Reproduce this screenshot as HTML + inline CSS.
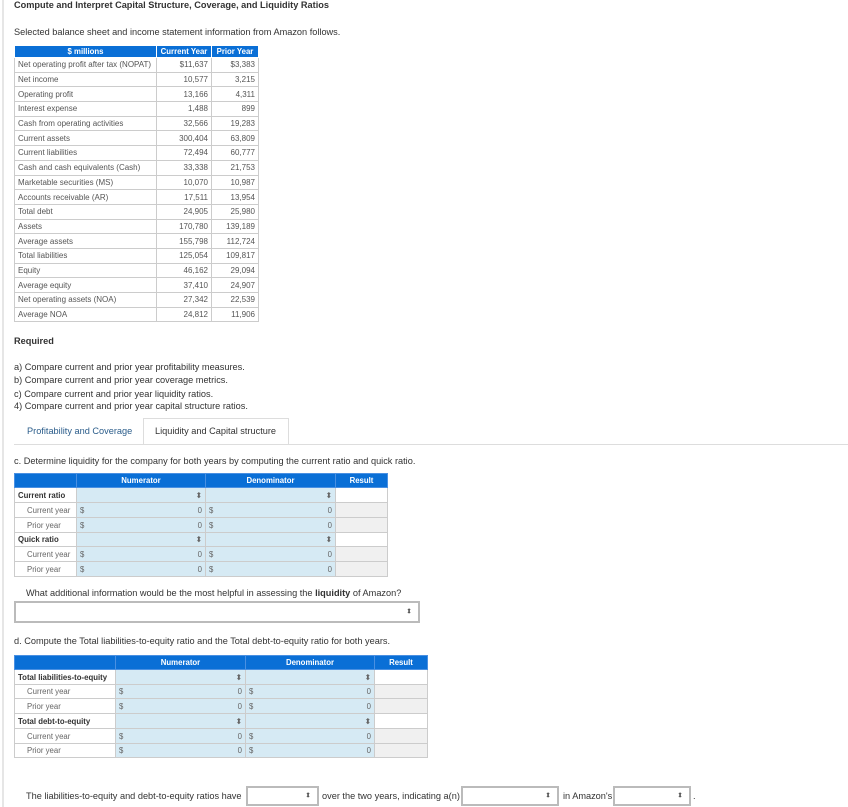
<!DOCTYPE html>
<html><head><meta charset="utf-8"><style>
*{box-sizing:border-box;margin:0;padding:0}
body{width:848px;height:807px;background:#fff;font-family:"Liberation Sans",sans-serif;font-size:9.2px;color:#333;position:relative;overflow:hidden}
.a{position:absolute;white-space:nowrap}
.lb{position:absolute;left:2px;top:0;width:2px;height:807px;background:#e6e6e6}
table{border-collapse:collapse;position:absolute;table-layout:fixed}
td,th{padding:0 3px;overflow:hidden;white-space:nowrap}
.dt td{border:1px solid #ccc;height:14.7px;font-size:8px;color:#555}
.dt td.n{text-align:right}
.dt th{background:#0a6fd6;color:#fff;height:12px;font-size:7.8px;border:1px solid #fff}
.ct th{background:#0a6fd6;color:#fff;font-size:7.8px;height:14px;border:1px solid #4a90e2}
.ct td{border:1px solid #ccc;font-size:7.8px;color:#666}
.ct td.h{font-weight:bold;color:#333}
.ct td.s{padding-left:12px}
.ct td.b{background:#d6eaf4}
.ct td.r{background:#f0f0f0}
.ct td.w{background:#fff}
.sel{position:absolute;border:2px solid #bbb;background:#fff}
.arr{position:absolute;right:6px;top:50%;transform:translateY(-50%);font-size:7px;line-height:3px;color:#555}
</style></head><body>
<div class="lb"></div>
<div class="a" style="left:14px;top:0px;font-weight:bold;font-size:9.2px">Compute and Interpret Capital Structure, Coverage, and Liquidity Ratios</div>
<div class="a" style="left:14px;top:27px">Selected balance sheet and income statement information from Amazon follows.</div>
<table class="dt" style="left:14px;top:45px;width:244px">
<colgroup><col style="width:142px"><col style="width:55px"><col style="width:47px"></colgroup>
<tr><th>$ millions</th><th>Current Year</th><th>Prior Year</th></tr>
<tr><td>Net operating profit after tax (NOPAT)</td><td class="n">$11,637</td><td class="n">$3,383</td></tr>
<tr><td>Net income</td><td class="n">10,577</td><td class="n">3,215</td></tr>
<tr><td>Operating profit</td><td class="n">13,166</td><td class="n">4,311</td></tr>
<tr><td>Interest expense</td><td class="n">1,488</td><td class="n">899</td></tr>
<tr><td>Cash from operating activities</td><td class="n">32,566</td><td class="n">19,283</td></tr>
<tr><td>Current assets</td><td class="n">300,404</td><td class="n">63,809</td></tr>
<tr><td>Current liabilities</td><td class="n">72,494</td><td class="n">60,777</td></tr>
<tr><td>Cash and cash equivalents (Cash)</td><td class="n">33,338</td><td class="n">21,753</td></tr>
<tr><td>Marketable securities (MS)</td><td class="n">10,070</td><td class="n">10,987</td></tr>
<tr><td>Accounts receivable (AR)</td><td class="n">17,511</td><td class="n">13,954</td></tr>
<tr><td>Total debt</td><td class="n">24,905</td><td class="n">25,980</td></tr>
<tr><td>Assets</td><td class="n">170,780</td><td class="n">139,189</td></tr>
<tr><td>Average assets</td><td class="n">155,798</td><td class="n">112,724</td></tr>
<tr><td>Total liabilities</td><td class="n">125,054</td><td class="n">109,817</td></tr>
<tr><td>Equity</td><td class="n">46,162</td><td class="n">29,094</td></tr>
<tr><td>Average equity</td><td class="n">37,410</td><td class="n">24,907</td></tr>
<tr><td>Net operating assets (NOA)</td><td class="n">27,342</td><td class="n">22,539</td></tr>
<tr><td>Average NOA</td><td class="n">24,812</td><td class="n">11,906</td></tr>
</table>
<div class="a" style="left:14px;top:336px;font-weight:bold">Required</div>
<div class="a" style="left:14px;top:362px">a) Compare current and prior year profitability measures.</div>
<div class="a" style="left:14px;top:375px">b) Compare current and prior year coverage metrics.</div>
<div class="a" style="left:14px;top:389px">c) Compare current and prior year liquidity ratios.</div>
<div class="a" style="left:14px;top:401px">4) Compare current and prior year capital structure ratios.</div>
<div class="a" style="left:27px;top:426px;color:#2a5c8a">Profitability and Coverage</div>
<div class="a" style="left:143px;top:418px;width:146px;height:27px;border:1px solid #ddd;border-bottom:none;background:#fff"></div>
<div class="a" style="left:155px;top:426px">Liquidity and Capital structure</div>
<div class="a" style="left:14px;top:444px;width:834px;height:1px;background:#ddd"></div>
<div class="a" style="left:14px;top:456px">c. Determine liquidity for the company for both years by computing the current ratio and quick ratio.</div>
<table class="ct" style="left:14px;top:473px;width:373px">
<colgroup><col style="width:62px"><col style="width:129px"><col style="width:130px"><col style="width:52px"></colgroup>
<tr><th style="background:#0a6fd6"></th><th>Numerator</th><th>Denominator</th><th>Result</th></tr>
<tr style="height:15px"><td class="h">Current ratio</td><td class="b" style="text-align:right">⬍</td><td class="b" style="text-align:right">⬍</td><td class="w"></td></tr>
<tr style="height:15px"><td class="s">Current year</td><td class="b">$<span style="float:right">0</span></td><td class="b">$<span style="float:right">0</span></td><td class="r"></td></tr>
<tr style="height:15px"><td class="s">Prior year</td><td class="b">$<span style="float:right">0</span></td><td class="b">$<span style="float:right">0</span></td><td class="r"></td></tr>
<tr style="height:14px"><td class="h">Quick ratio</td><td class="b" style="text-align:right">⬍</td><td class="b" style="text-align:right">⬍</td><td class="w"></td></tr>
<tr style="height:15px"><td class="s">Current year</td><td class="b">$<span style="float:right">0</span></td><td class="b">$<span style="float:right">0</span></td><td class="r"></td></tr>
<tr style="height:15px"><td class="s">Prior year</td><td class="b">$<span style="float:right">0</span></td><td class="b">$<span style="float:right">0</span></td><td class="r"></td></tr>
</table>
<div class="a" style="left:26px;top:588px">What additional information would be the most helpful in assessing the <b>liquidity</b> of Amazon?</div>
<div class="sel" style="left:14px;top:601px;width:406px;height:22px"><span class="arr">⬍</span></div>
<div class="a" style="left:14px;top:636px">d. Compute the Total liabilities-to-equity ratio and the Total debt-to-equity ratio for both years.</div>
<table class="ct" style="left:14px;top:655px;width:413px">
<colgroup><col style="width:101px"><col style="width:130px"><col style="width:129px"><col style="width:53px"></colgroup>
<tr><th style="background:#0a6fd6"></th><th>Numerator</th><th>Denominator</th><th>Result</th></tr>
<tr style="height:15px"><td class="h">Total liabilities-to-equity</td><td class="b" style="text-align:right">⬍</td><td class="b" style="text-align:right">⬍</td><td class="w"></td></tr>
<tr style="height:14px"><td class="s">Current year</td><td class="b">$<span style="float:right">0</span></td><td class="b">$<span style="float:right">0</span></td><td class="r"></td></tr>
<tr style="height:15px"><td class="s">Prior year</td><td class="b">$<span style="float:right">0</span></td><td class="b">$<span style="float:right">0</span></td><td class="r"></td></tr>
<tr style="height:15px"><td class="h">Total debt-to-equity</td><td class="b" style="text-align:right">⬍</td><td class="b" style="text-align:right">⬍</td><td class="w"></td></tr>
<tr style="height:15px"><td class="s">Current year</td><td class="b">$<span style="float:right">0</span></td><td class="b">$<span style="float:right">0</span></td><td class="r"></td></tr>
<tr style="height:14px"><td class="s">Prior year</td><td class="b">$<span style="float:right">0</span></td><td class="b">$<span style="float:right">0</span></td><td class="r"></td></tr>
</table>
<div class="a" style="left:26px;top:791px">The liabilities-to-equity and debt-to-equity ratios have</div>
<div class="sel" style="left:246px;top:786px;width:73px;height:20px"><span class="arr">⬍</span></div>
<div class="a" style="left:322px;top:791px">over the two years, indicating a(n)</div>
<div class="sel" style="left:461px;top:786px;width:98px;height:20px"><span class="arr">⬍</span></div>
<div class="a" style="left:563px;top:791px">in Amazon's</div>
<div class="sel" style="left:613px;top:786px;width:78px;height:20px"><span class="arr">⬍</span></div>
<div class="a" style="left:693px;top:791px">.</div>
</body></html>
